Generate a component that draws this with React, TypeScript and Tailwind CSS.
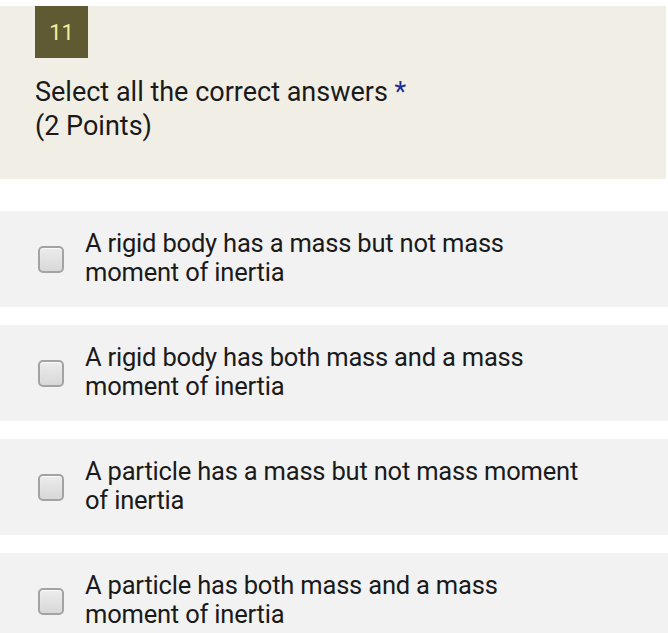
const options = [
  ["A rigid body has a mass but not mass", "moment of inertia"],
  ["A rigid body has both mass and a mass", "moment of inertia"],
  ["A particle has a mass but not mass moment", "of inertia"],
  ["A particle has both mass and a mass", "moment of inertia"],
];

function Checkbox() {
  return (
    <span className="block h-[27px] w-[26px] shrink-0 rounded-[5px] border-2 border-[#a3a3a3] bg-gradient-to-b from-[#ececec] to-[#d8d8d8] shadow-[inset_0_1px_1px_rgba(255,255,255,0.8)]" />
  );
}

export default function App() {
  return (
    <div className="h-[633px] w-[668px] overflow-hidden bg-white pt-[6px] font-['Roboto',sans-serif] text-[#1a1a1a]">
      <div className="mr-[2px] h-[173px] bg-[#f1eee6] pl-[35px]">
        <div className="flex h-[52px] w-[53px] items-center justify-center bg-[#5f5a31] text-[22px] text-[#f4efa6]">
          11
        </div>
        <div className="mt-[17px] text-[27px] leading-[34px]">
          <p>
            Select all the correct answers <span className="text-[#1c2b8c]">*</span>
          </p>
          <p>(2 Points)</p>
        </div>
      </div>
      <div className="mt-[32px] flex flex-col gap-[18px]">
        {options.map(([a, b]) => (
          <div key={a} className="flex h-[96px] shrink-0 items-center bg-[#f2f2f2] pl-[38px]">
            <Checkbox />
            <div className="mb-[3px] ml-[21px] text-[25.5px] leading-[29px] tracking-[-0.2px]">
              <p>{a}</p>
              <p>{b}</p>
            </div>
          </div>
        ))}
      </div>
    </div>
  );
}
